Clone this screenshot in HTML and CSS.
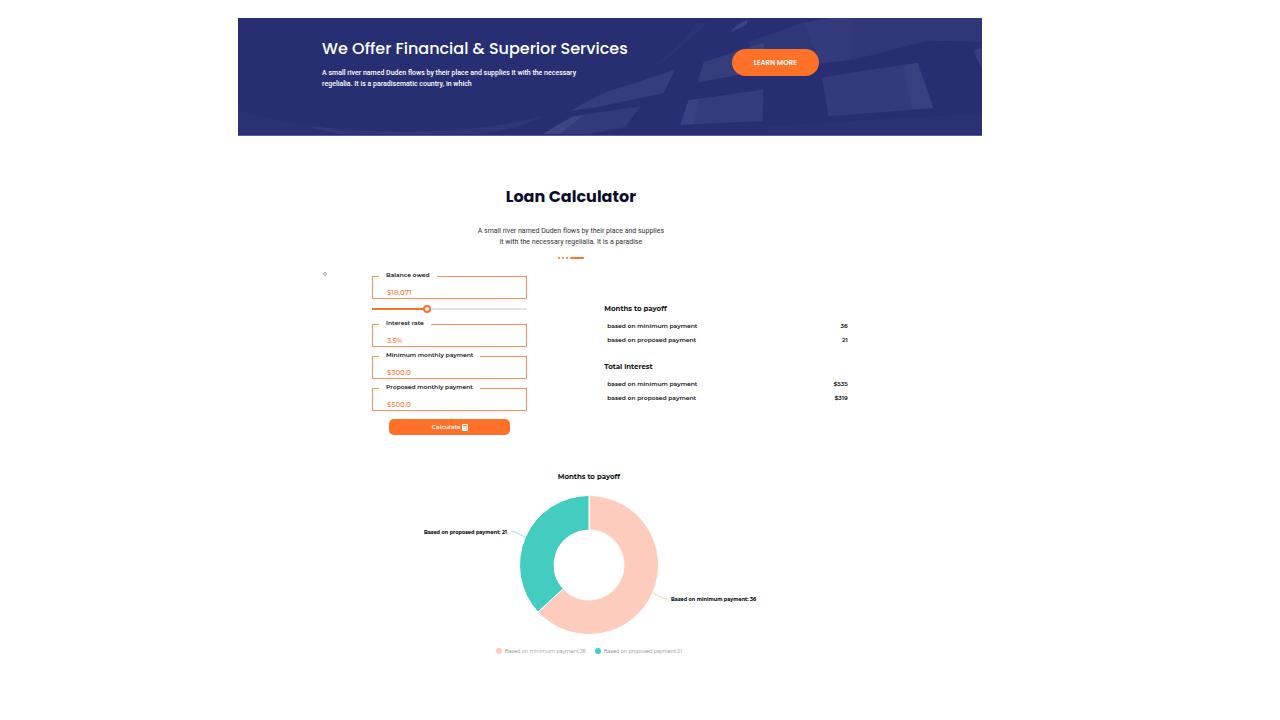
FILE: index.html
```html
<!DOCTYPE html>
<html lang="en">
<head>
    <meta charset="UTF-8">
    <meta name="viewport" content="width=device-width, initial-scale=1.0">
    <title>Loan Calculator</title>
    <link rel="stylesheet" href="styles.css">
</head>
<body>
    <div class="page">
        <section class="banner">
            <svg class="banner-bg" viewBox="0 0 743 118" preserveAspectRatio="none" aria-hidden="true">
                <g fill="#7c82b8">
                    <path opacity=".1" d="M509 25 L562 5 L590 0 H743 V24 L689 23 L615 42 L582 46 L530 50Z"/>
                    <path opacity=".06" d="M565 5 L590 0 H612 V42 L582 46Z"/>
                    <path opacity=".15" d="M583 60 L679 45 L695 91 L590 99Z"/>
                    <path opacity=".08" d="M665 49 L679 45 L695 91 L674 92Z"/>
                    <path opacity=".16" d="M450 83 L525 72 L524 104 L442 108Z"/>
                    <path opacity=".09" d="M450 83 L460 81 L456 107 L442 108Z"/>
                    <path opacity=".17" d="M465 45 L494 35 L525 25 L529 52 L459 65Z"/>
                    <path opacity=".24" d="M493 14 Q494 8 509 2 L508 7Z"/>
                    <path opacity=".18" d="M332 94 Q358 76 392 67 L437 52 L425 76 L362 89Z"/>
                    <path opacity=".14" d="M305 117 Q318 108 335 99 L402 89 L387 110 L350 117Z"/>
                    <path opacity=".16" d="M305 117 Q318 108 335 99 L345 98 L322 117Z"/>
                    <path opacity=".1" d="M69 109 Q205 124 305 99 Q275 114 240 117 H100Z"/>
                    <path opacity=".04" d="M0 92 Q30 103 69 107 Q90 112 120 117 H0Z"/>
                    <path opacity=".06" d="M399 60 Q432 42 469 5 L458 5 Q435 38 399 60Z"/>
                    <path opacity=".04" d="M530 109 L743 96 V117 H530Z"/>
                    <path opacity=".2" d="M735 33 L743 30 V52Z"/>
                </g>
            </svg>
            <div class="banner-text">
                <h2>We Offer Financial &amp; Superior Services</h2>
                <p>A small river named Duden flows by their place and supplies it with the necessary regelialia. It is a paradisematic country, in which</p>
            </div>
            <button type="button" class="learn-more">LEARN MORE</button>
        </section>

        <section class="intro">
            <h1>Loan Calculator</h1>
            <p>A small river named Duden flows by their place and supplies it with the necessary regelialia. It is a paradise</p>
            <div class="divider"><i></i><i></i><i></i><b></b></div>
        </section>

        <section class="calculator">
            <div class="marker"></div>
            <form class="loan-form">
                <fieldset>
                    <legend><label for="balance">Balance owed</label></legend>
                    <input type="text" id="balance" value="$18,071">
                </fieldset>
                <input type="range" class="slider" id="balance-range" aria-label="Balance owed" min="1000" max="50000" value="18071" style="--fill: 35%">
                <fieldset>
                    <legend><label for="rate">Interest rate</label></legend>
                    <input type="text" id="rate" value="3.5%">
                </fieldset>
                <fieldset>
                    <legend><label for="minimum">Minimum monthly payment</label></legend>
                    <input type="text" id="minimum" value="$300.0">
                </fieldset>
                <fieldset>
                    <legend><label for="proposed">Proposed monthly payment</label></legend>
                    <input type="text" id="proposed" value="$500.0">
                </fieldset>
                <button type="button" class="calculate">Calculate
                    <svg viewBox="0 0 14 16" aria-hidden="true">
                        <rect width="14" height="16" rx="2" fill="#fff"/>
                        <path d="M3 2h8v3H3z M3 8h1v1H3z M6 8h2v1H6z M3 12h1v1H3z M6 12h2v1H6z M10 8h1v5h-1z" fill="#ff7029"/>
                    </svg>
                </button>
            </form>
            <div class="results">
                <h3>Months to payoff</h3>
                <dl>
                    <div><dt>based on minimum payment</dt><dd>36</dd></div>
                    <div><dt>based on proposed payment</dt><dd>21</dd></div>
                </dl>
                <h3>Total interest</h3>
                <dl>
                    <div><dt>based on minimum payment</dt><dd>$535</dd></div>
                    <div><dt>based on proposed payment</dt><dd>$319</dd></div>
                </dl>
            </div>
        </section>

        <section class="chart">
            <h3>Months to payoff</h3>
            <svg class="donut" viewBox="0 0 340 150" role="img" aria-label="Months to payoff">
                <g stroke="#fff" stroke-width="1">
                    <path fill="#fdccbc" d="M170 5.5 A69.5 69.5 0 1 1 118.9 122.1 L144.2 98.7 A35 35 0 1 0 170 40Z"/>
                    <path fill="#43ccc0" d="M118.9 122.1 A69.5 69.5 0 0 1 170 5.5 V40 A35 35 0 0 0 144.2 98.7Z"/>
                </g>
                <path d="M234 103 L244 108 Q246 109 248 109" fill="none" stroke="#fdccbc"/>
                <path d="M106 47 L96 42 Q94 41 92 42" fill="none" stroke="#8fe0d8"/>
                <text class="donut-label" x="88" y="44" text-anchor="end">Based on proposed payment: 21</text>
                <text class="donut-label" x="252" y="111">Based on minimum payment: 36</text>
            </svg>
            <ul class="legend">
                <li class="minimum">Based on minimum payment:36</li>
                <li class="proposed">Based on proposed payment:21</li>
            </ul>
        </section>
    </div>
</body>
</html>
```

FILE: styles.css
```css
* {
    box-sizing: border-box;
}
body {
    margin: 0;
    background-color: #fff;
    color: #111;
    font-family: Montserrat, Inter, sans-serif;
    font-size: 6px;
}
h1, h2, h3, p, dl, dd, ul {
    margin: 0;
    padding: 0;
}
button, input {
    font-family: inherit;
}
.page {
    width: 58.1%;
    margin: 18px 0 0 18.6%;
}

/* banner */
.banner {
    position: relative;
    display: flex;
    justify-content: space-between;
    align-items: flex-start;
    height: 118px;
    padding: 20px 163px 0 84px;
    background-color: #272f72;
    border-bottom: 1px solid #5b6198;
    color: #fff;
}
.banner-bg {
    position: absolute;
    top: 0;
    left: 0;
    width: 100%;
    height: 100%;
}
.banner-text {
    position: relative;
}
.banner h2 {
    font-family: Poppins, Inter, sans-serif;
    font-size: 16px;
    font-weight: 500;
    line-height: 22px;
    white-space: nowrap;
}
.banner p {
    max-width: 270px;
    margin-top: 8px;
    font-family: Roboto, sans-serif;
    font-size: 7px;
    font-weight: 500;
    line-height: 11px;
}
.learn-more {
    position: relative;
    width: 87px;
    height: 27px;
    margin-top: 11px;
    padding: 0;
    border: none;
    border-radius: 14px;
    background-color: #ff7029;
    color: #fff;
    font-family: Poppins, Inter, sans-serif;
    font-size: 7px;
    font-weight: 600;
    cursor: pointer;
}

/* heading */
.intro {
    display: flex;
    flex-direction: column;
    align-items: center;
    padding: 49px 78px 0 0;
    text-align: center;
}
.intro h1 {
    font-family: Poppins, Inter, sans-serif;
    font-size: 16px;
    font-weight: 700;
    line-height: 24px;
    color: #0b0e2b;
}
.intro p {
    max-width: 190px;
    margin-top: 17px;
    font-family: Roboto, sans-serif;
    font-size: 7px;
    line-height: 11px;
    color: #333;
}
.divider {
    display: flex;
    gap: 2px;
    margin-top: 9px;
}
.divider i, .divider b {
    width: 2px;
    height: 2px;
    border-radius: 1px;
    background-color: #ff7029;
}
.divider b {
    width: 14px;
}

/* calculator */
.calculator {
    display: grid;
    grid-template-columns: 49px 155fr 320fr;
    padding: 12px 134px 0 85px;
}
.marker {
    width: 4px;
    height: 4px;
    margin-top: 1px;
    border: 1px solid #bbb;
    border-radius: 50%;
    background-color: #ddd;
}
.loan-form {
    display: flex;
    flex-direction: column;
}
fieldset {
    min-width: 0;
    height: 28px;
    margin: 0 0 4px;
    padding: 0 6px;
    border: 1px solid #ff8f5a;
}
legend {
    padding: 0 7px 2px;
    font-size: 6px;
    font-weight: 600;
    line-height: 8px;
}
fieldset input {
    display: block;
    width: 100%;
    height: 10px;
    margin-top: 6px;
    padding: 0 8px;
    border: none;
    outline: none;
    background: none;
    color: #ff7446;
    font-size: 7px;
    font-weight: 500;
}
.slider {
    appearance: none;
    height: 8px;
    margin: 2px 0 6px;
    background: linear-gradient(to right, #ff7029 var(--fill), #dde2ee var(--fill)) center / 100% 2px no-repeat;
}
.slider::-webkit-slider-thumb {
    appearance: none;
    width: 8px;
    height: 8px;
    border: 2px solid #ff7029;
    border-radius: 50%;
    background-color: #fff;
}
.calculate {
    display: flex;
    justify-content: center;
    align-items: center;
    gap: 1px;
    height: 16px;
    margin: 4px 17px 0;
    padding: 0;
    border: none;
    border-radius: 5px;
    background-color: #ff7029;
    color: #fff;
    font-size: 6px;
    font-weight: 600;
    cursor: pointer;
}
.calculate svg {
    width: 6px;
    height: 7px;
}
.results {
    padding: 33px 0 0 77px;
}
.results h3, .chart h3 {
    font-size: 7px;
    font-weight: 700;
    line-height: 10px;
}
.results dl {
    margin: 5px 0 15px 3px;
}
.results dl div {
    display: flex;
    justify-content: space-between;
    font-weight: 600;
    line-height: 14px;
}

/* chart */
.chart {
    display: flex;
    flex-direction: column;
    align-items: center;
    padding: 37px 42px 0 0;
}
.donut {
    width: 340px;
    height: 150px;
    margin-top: 8px;
}
.donut-label {
    font-size: 5px;
    font-weight: 700;
}
.legend {
    display: flex;
    gap: 9px;
    margin-top: 7px;
    list-style: none;
    font-size: 5px;
    line-height: 8px;
    color: #888;
}
.legend li {
    display: flex;
    align-items: center;
    gap: 3px;
}
.legend li::before {
    content: "";
    width: 6px;
    height: 6px;
    border-radius: 50%;
}
.legend .minimum::before {
    background-color: #fdccbc;
}
.legend .proposed::before {
    background-color: #43ccc0;
}
```
